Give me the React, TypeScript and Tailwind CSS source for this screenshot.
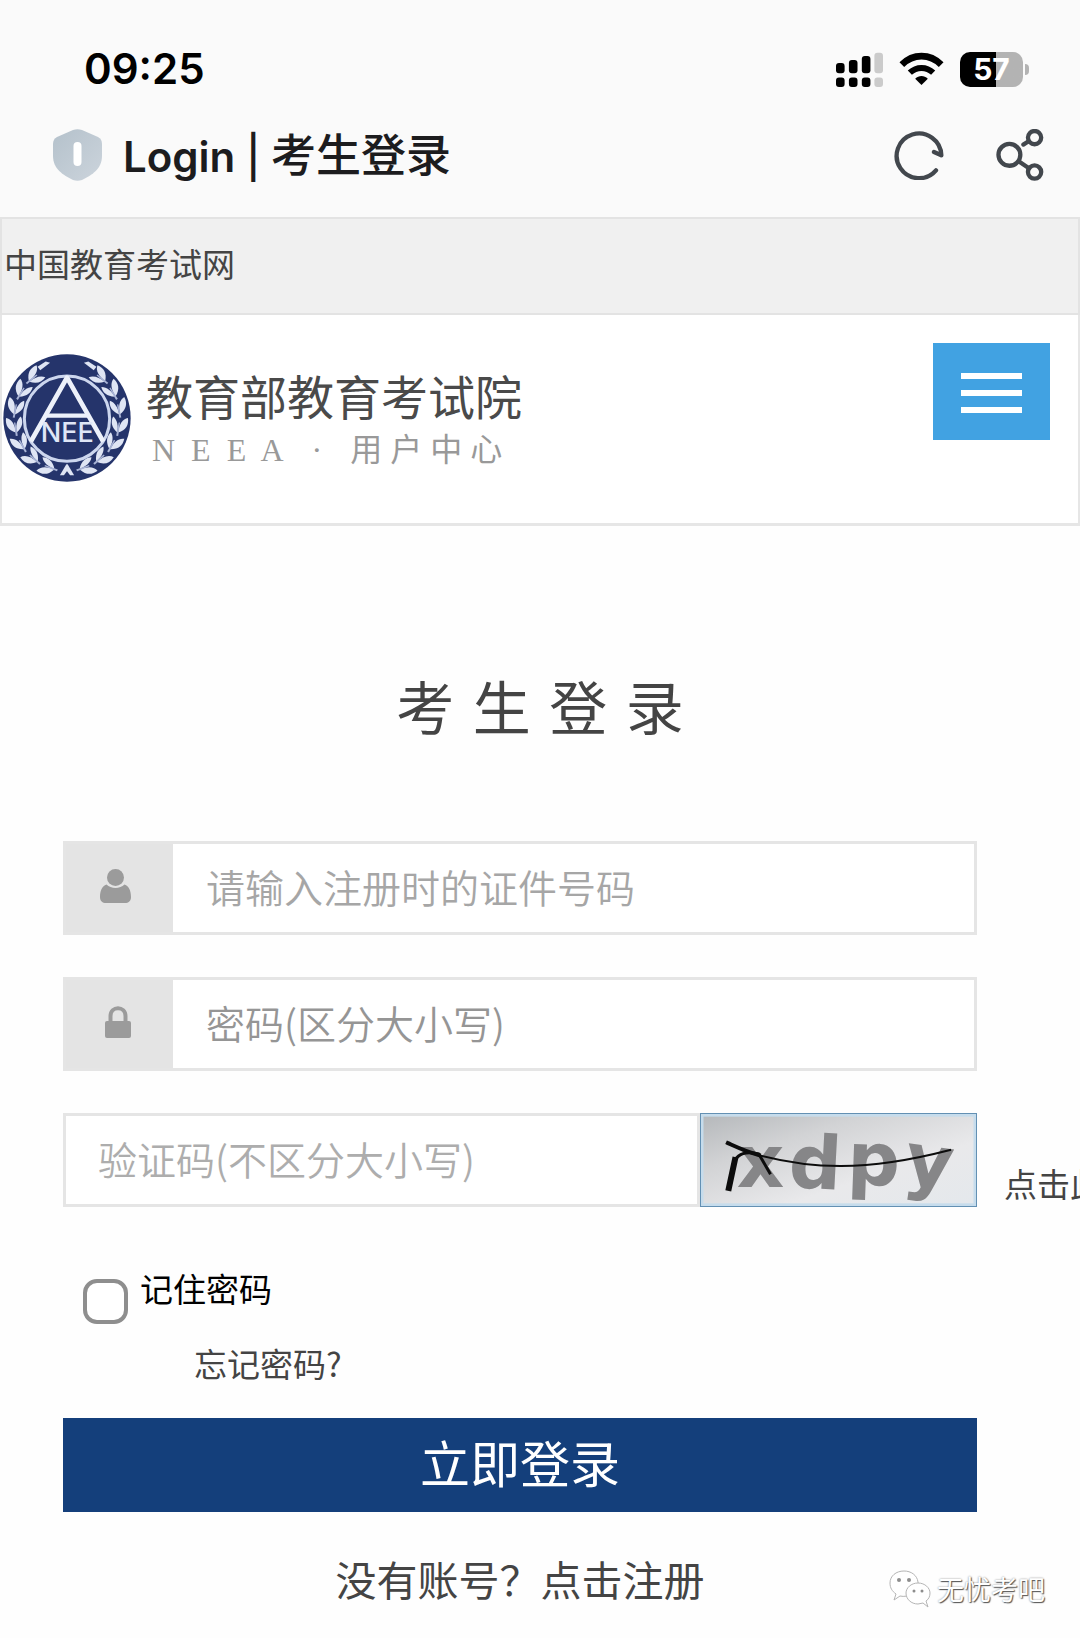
import React, { useState } from "react";

const leafAngles = [36, 56, 76, 96, 116, 136, 156];

const Emblem = () => (
  <svg viewBox="10 44 378 378" className="h-32 w-32 shrink-0" aria-hidden="true">
    <circle cx="199" cy="233" r="188" fill="#25346b" />
    {[1, -1].map((side) => (
      <g key={side} transform={side === 1 ? undefined : "translate(398 0) scale(-1 1)"} fill="#dfe5f4">
        {leafAngles.map((angle) => (
          <g key={angle} transform={`rotate(${angle} 199 233)`}>
            <path d="M226 78 C216 56 200 49 180 54 C184 69 202 79 226 78 Z" />
            <path d="M226 81 C212 100 196 104 180 98 C188 85 206 79 226 81 Z" />
            <path d="M196 76 L236 77 L236 83 L196 80 Z" fill="#a9b4d6" />
          </g>
        ))}
        <path d="M249 70 L262 66 L286 82 L278 92 Z" />
        <path d="M200 368 L220 402 L208 402 L196 386 Z" />
      </g>
    ))}
    <circle cx="199" cy="235" r="126" fill="#25346b" stroke="#ccd6ee" strokeWidth="9" />
    <path d="M92 303 L199 114 L306 303" fill="none" stroke="#edf1fa" strokeWidth="14" strokeLinejoin="round" />
    <path d="M136 226 H262" stroke="#edf1fa" strokeWidth="12" />
    <text x="200" y="304" textAnchor="middle" fill="#dfe6f6" fontSize="80" fontWeight="500" fontFamily="Inter, sans-serif">NEE</text>
  </svg>
);

const Signal = () => (
  <svg viewBox="0 0 142 105" className="h-[35px] w-[47px]" aria-hidden="true">
    <g fill="#000">
      <rect x="0" y="33" width="26" height="31" rx="9" />
      <rect x="39" y="24" width="26" height="40" rx="9" />
      <rect x="78" y="12" width="26" height="52" rx="9" />
      <rect x="0" y="77" width="26" height="28" rx="9" />
      <rect x="39" y="77" width="26" height="28" rx="9" />
      <rect x="78" y="77" width="26" height="28" rx="9" />
    </g>
    <g fill="#cbcbcb">
      <rect x="116" y="2" width="26" height="62" rx="9" />
      <rect x="116" y="77" width="26" height="28" rx="9" />
    </g>
  </svg>
);

const Wifi = () => (
  <svg viewBox="0 0 134 102" className="h-[34px] w-[45px]" aria-hidden="true">
    <path d="M8 38 C42 4 92 4 126 38" fill="none" stroke="#000" strokeWidth="20" />
    <path d="M32 62 C52 43 82 43 102 62" fill="none" stroke="#000" strokeWidth="18" />
    <path d="M48 80 C59 69 75 69 86 80 L67 99 Z" />
  </svg>
);

const Battery = () => (
  <div className="flex items-center gap-[2px]">
    <div className="flex h-[35px] w-[63px] items-center justify-center rounded-[10px] bg-linear-to-r from-black from-57% to-[#b3b3b3] to-57% text-[30px] leading-none font-bold text-white">
      57
    </div>
    <div className="h-[11px] w-1 rounded-r-full bg-[#b3b3b3]" />
  </div>
);

const Shield = () => (
  <svg viewBox="0 0 51 52" className="h-[52px] w-[51px]" aria-hidden="true">
    <defs>
      <linearGradient id="shield" x1="0" y1="0" x2="1" y2="1">
        <stop offset="0" stopColor="#b4c1cb" />
        <stop offset="1" stopColor="#ccd4dc" />
      </linearGradient>
    </defs>
    <path d="M21 1 Q25.500 -0.500 30 1 L46 8 Q50 10 50 15 V27 C50 40 40 46 30 51 Q25.500 52.500 21 51 C11 46 1 40 1 27 V15 Q1 10 5 8 Z" fill="url(#shield)" />
    <rect x="21.500" y="13" width="8" height="24" rx="4" fill="#fff" />
  </svg>
);

const Refresh = () => (
  <svg viewBox="0 0 150 150" className="h-[50px] w-[50px]" fill="none" stroke="#42474d" strokeWidth="13" strokeLinecap="round" strokeLinejoin="round" aria-hidden="true">
    <path d="M126 121 A67 67 0 1 1 142 76 L120 66" />
  </svg>
);

const Share = () => (
  <svg viewBox="0 0 144 160" className="h-[53px] w-12" fill="none" stroke="#42474d" strokeWidth="13" strokeLinecap="round" aria-hidden="true">
    <circle cx="40" cy="78" r="33" />
    <circle cx="116" cy="26" r="20" />
    <circle cx="116" cy="130" r="20" />
    <path d="M82 47 L98 37 M69 98 L98 118" />
  </svg>
);

const UserIcon = () => (
  <svg viewBox="0 0 31 34" className="h-[34px] w-[31px]" fill="#9b9b9b" aria-hidden="true">
    <ellipse cx="15.500" cy="8.500" rx="8.500" ry="8.500" />
    <path d="M6.500 15.500 C11 20 20 20 24.500 15.500 C29 17 31 22 31 28 C31 32 28.500 34 25 34 H6 C2.500 34 0 32 0 28 C0 22 2 17 6.500 15.500 Z" />
  </svg>
);

const LockIcon = () => (
  <svg viewBox="0 0 26 32" className="ml-1 h-8 w-[26px]" aria-hidden="true">
    <path d="M5.500 16 V10 C5.500 -0.500 20.500 -0.500 20.500 10 V16" fill="none" stroke="#9b9b9b" strokeWidth="4" />
    <rect y="15" width="26" height="17" rx="2" fill="#9b9b9b" />
  </svg>
);

const Captcha = () => (
  <svg viewBox="0 0 276 92" className="h-full w-full" role="img" aria-label="xdpy">
    <defs>
      <linearGradient id="noise" x1="0" y1="0" x2="1" y2="1">
        <stop offset="0" stopColor="#b4b7ba" />
        <stop offset="0.300" stopColor="#d2d3d5" />
        <stop offset="0.650" stopColor="#e9e9eb" />
        <stop offset="1" stopColor="#e4e8ec" />
      </linearGradient>
    </defs>
    <rect width="276" height="92" fill="url(#noise)" />
    <rect x="1" y="1" width="274" height="90" fill="none" stroke="#c6dcec" strokeWidth="3" />
    <text x="36 87 146 202" y="73 73 70 69" rotate="0 3 2 8" fill="#868688" fontSize="74" fontWeight="700" fontFamily="'DejaVu Sans', sans-serif">xdpy</text>
    <g fill="none" stroke="#0c0c0c" strokeLinecap="square">
      <path d="M27 29 C38 34 44 37 58 41" strokeWidth="4" />
      <path d="M50 39 C110 56 165 58 250 36" strokeWidth="2" />
      <path d="M28 74 L34 46" strokeWidth="6" />
      <path d="M34 46 C38 40 44 37 58 40 L69 59" strokeWidth="3" />
    </g>
  </svg>
);

const WeChat = () => (
  <svg viewBox="0 0 42 38" className="h-[38px] w-[42px]" fill="#fff" stroke="#b5b5b5" strokeWidth="1" aria-hidden="true">
    <path d="M15 1 C7 1 1 6 1 13 C1 18 3 21 7 24 L5 30 L11 26 C15 27 20 26 23 24 C28 21 30 17 29 12 C28 5 22 1 15 1 Z" />
    <path d="M29 13 C22 13 17 18 17 23 C17 29 22 34 29 34 L34 33 L39 37 L37 31 C40 29 41 26 41 23 C41 18 36 13 29 13 Z" />
    <g fill="#8d8d8d" stroke="none">
      <circle cx="10" cy="10" r="2" />
      <circle cx="20" cy="10" r="2" />
      <circle cx="25" cy="21" r="1.500" />
      <circle cx="33" cy="21" r="1.500" />
    </g>
  </svg>
);

const App = () => {
  const [menuOpen, setMenuOpen] = useState(false);
  const [remember, setRemember] = useState(false);

  const fields = [
    { id: "account", type: "text", placeholder: "请输入注册时的证件号码", icon: <UserIcon />, tone: "placeholder:text-[#a6a6a6]" },
    { id: "password", type: "password", placeholder: "密码(区分大小写)", icon: <LockIcon />, tone: "placeholder:text-[#959595]" },
  ];

  return (
    <div className="relative min-h-screen overflow-hidden bg-[#fefefe] font-['Inter','Noto_Sans_CJK_SC',sans-serif] text-[#444]">
      <header className="bg-[#fafafa] pt-11 pb-8">
        <div className="flex h-[50px] items-center justify-between pr-[51px] pl-[84px]">
          <span className="text-[42px] leading-none font-semibold text-black">09:25</span>
          <div className="flex items-center gap-4">
            <Signal />
            <Wifi />
            <Battery />
          </div>
        </div>
        <div className="mt-[31px] flex h-[60px] items-center justify-between pr-9 pl-[52px]">
          <div className="flex items-center gap-5">
            <Shield />
            <h1 className="text-[42px] leading-none font-semibold whitespace-nowrap text-[#1c1c1e]">
              Login <span className="font-medium">|</span> <span className="text-[45px] font-medium">考生登录</span>
            </h1>
          </div>
          <div className="flex items-center gap-[52px]">
            <button type="button" aria-label="刷新"><Refresh /></button>
            <button type="button" aria-label="分享"><Share /></button>
          </div>
        </div>
      </header>

      <div className="border-2 border-[#e3e3e3] bg-[#f0f0f0] pt-5 pb-[25px] pl-[2px] text-[33px] leading-[49px] font-['Noto_Sans_CJK_SC',sans-serif]">
        <a href="#">中国教育考试网</a>
      </div>

      <nav className="flex items-start justify-between border-x-2 border-b-3 border-[#e6e6e6] bg-white pt-7 pr-7 pb-[41px]">
        <a href="#" className="flex items-center gap-[15px] pt-[11px] pl-[1px]">
          <Emblem />
          <div className="pt-2 text-[#4a4a4a]">
            <div className="text-[47px] leading-[56px]">教育部教育考试院</div>
            <div className="flex gap-7 pl-[6px] font-['Liberation_Serif','Noto_Sans_CJK_SC',serif] text-[32px] leading-[48px] whitespace-pre text-[#999]">
              <span>N  E  E  A</span>
              <span>·</span>
              <span>用 户 中 心</span>
            </div>
          </div>
        </a>
        <button
          type="button"
          aria-label="菜单"
          onClick={() => setMenuOpen(!menuOpen)}
          className="flex h-[97px] w-[117px] flex-col items-center justify-center gap-[11px] bg-[#41a2e2] pt-[3px]"
        >
          <span className="h-[6px] w-[61px] bg-white" />
          <span className="h-[6px] w-[61px] bg-white" />
          <span className="h-[6px] w-[61px] bg-white" />
        </button>
      </nav>

      <main className="pt-36 pb-6">
        <h2 className="text-center font-['DejaVu_Sans','Noto_Sans_CJK_SC',sans-serif] text-[58px] leading-[80px]">考 生 登 录</h2>

        <form className="mr-[103px] ml-[63px] mt-[91px] font-['Noto_Sans_CJK_SC',sans-serif]" onSubmit={(e) => e.preventDefault()}>
          {fields.map((field) => (
            <div key={field.id} className="mb-[42px] flex h-[94px] border-3 border-[#e5e5e5] bg-white">
              <label htmlFor={field.id} aria-label={field.placeholder} className="flex w-[107px] shrink-0 items-center justify-center bg-[#e4e4e4] pr-2 pb-1">
                {field.icon}
              </label>
              <input
                id={field.id}
                type={field.type}
                placeholder={field.placeholder}
                className={`min-w-0 flex-1 px-[33px] pb-1 text-[39px] font-[350] outline-none ${field.tone}`}
              />
            </div>
          ))}

          <div className="flex h-[94px]">
            <input
              type="text"
              aria-label="验证码"
              placeholder="验证码(不区分大小写)"
              className="min-w-0 flex-1 border-3 border-[#e5e5e5] bg-white px-8 pb-1 text-[39px] font-[350] outline-none placeholder:text-[#adadad]"
            />
            <button type="button" className="w-[277px] shrink-0 border border-[#6390b3]">
              <Captcha />
            </button>
            <div className="-mr-[103px] w-[103px] shrink-0 overflow-hidden pt-[46px] pl-[27px] text-[33px] leading-[49px] whitespace-nowrap">
              点击此处
            </div>
          </div>

          <div className="mt-[57px] flex items-start gap-3 pl-5">
            <input
              id="remember"
              type="checkbox"
              checked={remember}
              onChange={() => setRemember(!remember)}
              className="mt-[15px] h-[45px] w-[45px] appearance-none rounded-[14px] border-4 border-[#8e8e8e] bg-white checked:bg-[#41a2e2]"
            />
            <label htmlFor="remember" className="text-[33px] leading-[49px] text-black">记住密码</label>
          </div>
          <a href="#" className="mt-[15px] ml-[131px] block w-fit text-[33px] leading-[49px]">忘记密码?</a>

          <button type="submit" className="mt-[30px] block h-[94px] w-full bg-[#143f7b] pb-2 text-[50px] leading-none text-white">
            立即登录
          </button>
          <p className="mt-[35px] text-center text-[41px] leading-[62px]">
            没有账号？<a href="#">点击注册</a>
          </p>
        </form>
      </main>

      <div className="absolute right-[35px] bottom-[30px] flex items-center gap-[6px] font-['Noto_Sans_CJK_SC',sans-serif] text-[27px] leading-[38px] text-white [text-shadow:1px_1px_1px_#555,0_0_2px_#888]">
        <WeChat />
        无忧考吧
      </div>
    </div>
  );
};

export default App;
